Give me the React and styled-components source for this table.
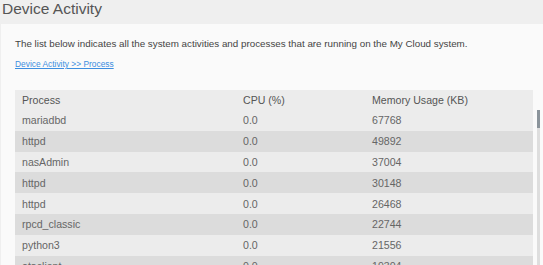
import React from 'react'
import styled, { createGlobalStyle } from 'styled-components'

const GlobalStyle = createGlobalStyle`
  html, body {
    margin: 0;
    padding: 0;
    background: #efefef;
    font-family: 'Liberation Sans', Arial, sans-serif;
    overflow: hidden;
  }
`

const Page = styled.div`
  padding: 0 0 0 1px;
  height: 265px;
  display: flex;
  flex-direction: column;
`

const Title = styled.h1`
  margin: 0;
  padding: 0 0 0 1px;
  height: 24px;
  font-size: 15.5px;
  font-weight: 400;
  line-height: 17px;
  color: #555;
`

const Card = styled.div`
  flex: 1;
  background: #fafafa;
  padding: 14px 0 0 14px;
  overflow: hidden;
`

const Intro = styled.p`
  margin: 0;
  font-size: 9.8px;
  line-height: 12px;
  color: #444;
`

const Crumb = styled.a`
  display: block;
  width: fit-content;
  margin-top: 9px;
  font-size: 8.4px;
  line-height: 10px;
  color: #3d8ee0;
  text-decoration: underline;
`

const TableWrap = styled.div`
  margin-top: 21px;
  display: flex;
  flex-direction: column;
`

const Row = styled.div`
  display: grid;
  grid-template-columns: 221px 129px 168px;
  width: 518px;
  height: ${p => (p.$head ? '20px' : '20.8px')};
  align-items: center;
  background: ${p => (p.$dark ? '#dcdcdc' : '#ececec')};
  font-size: 10.6px;
  color: ${p => (p.$head ? '#555' : '#666')};
`

const Cell = styled.span`
  padding-left: 7px;
  white-space: nowrap;
`

const BodyArea = styled.div`
  display: flex;
  gap: 4px;
`

const Rows = styled.div`
  display: flex;
  flex-direction: column;
`

const Track = styled.div`
  width: 3px;
  background: #dedede;
  display: flex;
  flex-direction: column;
`

const Thumb = styled.div`
  height: 18px;
  background: #8b949b;
`

const processes = [
  ['mariadbd', '0.0', '67768'],
  ['httpd', '0.0', '49892'],
  ['nasAdmin', '0.0', '37004'],
  ['httpd', '0.0', '30148'],
  ['httpd', '0.0', '26468'],
  ['rpcd_classic', '0.0', '22744'],
  ['python3', '0.0', '21556'],
  ['otaclient', '0.0', '19304'],
  ['wdmcserver', '0.0', '17120']
]

const App = () => (
  <Page>
    <GlobalStyle />
    <Title>Device Activity</Title>
    <Card>
      <Intro>
        The list below indicates all the system activities and processes that are running on the My Cloud system.
      </Intro>
      <Crumb href='#'>Device Activity &gt;&gt; Process</Crumb>
      <TableWrap>
        <Row $head>
          <Cell>Process</Cell>
          <Cell>CPU (%)</Cell>
          <Cell>Memory Usage (KB)</Cell>
        </Row>
        <BodyArea>
          <Rows>
            {processes.map((p, i) => (
              <Row key={i} $dark={i % 2 === 1}>
                <Cell>{p[0]}</Cell>
                <Cell>{p[1]}</Cell>
                <Cell>{p[2]}</Cell>
              </Row>
            ))}
          </Rows>
          <Track>
            <Thumb />
          </Track>
        </BodyArea>
      </TableWrap>
    </Card>
  </Page>
)

export default App
